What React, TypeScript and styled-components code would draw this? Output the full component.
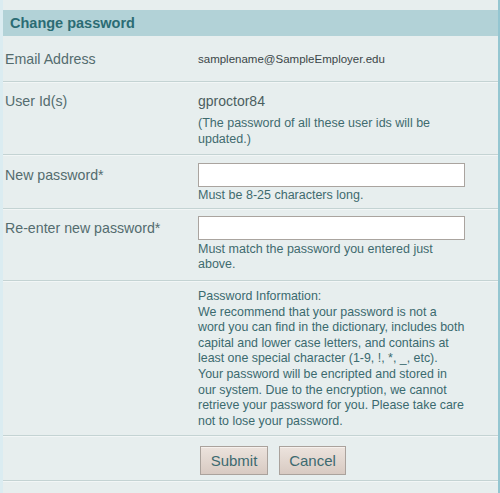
import React from "react";
import styled, { createGlobalStyle } from "styled-components";

const GlobalStyle = createGlobalStyle`
  html, body {
    margin: 0;
    padding: 0;
    background: #e7eeee;
  }
  body {
    font-family: "Liberation Sans", Arial, sans-serif;
  }
`;

const Page = styled.div`
  width: 500px;
  height: 493px;
  box-sizing: border-box;
  padding-top: 10px;
  background: #e7eeee;
  border-left: 3px solid #dbecf1;
  border-right: 2px solid #95c6d1;
  overflow: hidden;
`;

const Header = styled.div`
  height: 26px;
  display: flex;
  align-items: center;
  padding-left: 7px;
  background: #b2d2d7;
  color: #2b6c74;
  font-size: 14.5px;
  font-weight: 700;
`;

const Row = styled.div<{ $pt: number; $pb: number; $center?: boolean }>`
  display: grid;
  grid-template-columns: 193px 272px;
  align-items: ${(p) => (p.$center ? "center" : "start")};
  padding: ${(p) => `${p.$pt}px 0 ${p.$pb}px 2px`};
  border-bottom: 1px solid #c4d3d3;
  box-shadow: 0 1px 0 #f2f6f6;
  margin-bottom: 1px;
`;

const Label = styled.div<{ $lh: number }>`
  font-size: 14.2px;
  line-height: ${(p) => p.$lh}px;
  color: #546c6e;
`;

const Value = styled.div`
  display: flex;
  flex-direction: column;
`;

const Email = styled.div`
  font-size: 11.5px;
  line-height: 16px;
  color: #3b4648;
`;

const UserId = styled.div`
  font-size: 14px;
  line-height: 18px;
  color: #4b5e60;
`;

const Note = styled.div<{ $mt?: number; $lh?: number }>`
  font-size: 12.5px;
  line-height: ${(p) => p.$lh ?? 16}px;
  margin-top: ${(p) => p.$mt ?? 0}px;
  color: #3f6b6f;
  white-space: nowrap;
`;

const Input = styled.input`
  width: 267px;
  height: 24px;
  box-sizing: border-box;
  margin: 0;
  border: 1px solid #aaa49f;
  background: #ffffff;
  font-family: inherit;
  font-size: 13px;
  padding: 2px 4px;
`;

const Info = styled.div`
  font-size: 12.4px;
  line-height: 15.6px;
  color: #3b6a6e;
  white-space: nowrap;
`;

const Line = styled.span`
  display: block;
`;

const Buttons = styled.div`
  display: flex;
  gap: 11px;
  padding-left: 2px;
`;

const Button = styled.button<{ $w: number }>`
  width: ${(p) => p.$w}px;
  height: 29px;
  box-sizing: border-box;
  border: 1px solid #aaa29c;
  background: linear-gradient(#ece3dd, #d8cac2);
  box-shadow: inset 0 1px 0 #f6f0ec;
  color: #3d6a70;
  font-family: inherit;
  font-size: 15px;
  padding: 0;
  cursor: pointer;
`;

const infoLines = [
  "Password Information:",
  "We recommend that your password is not a",
  "word you can find in the dictionary, includes both",
  "capital and lower case letters, and contains at",
  "least one special character (1-9, !, *, _, etc).",
  "Your password will be encripted and stored in",
  "our system. Due to the encryption, we cannot",
  "retrieve your password for you. Please take care",
  "not to lose your password.",
];

export default function App() {
  return (
    <>
      <GlobalStyle />
      <Page>
        <Header>Change password</Header>

        <Row $pt={15} $pb={14} $center>
          <Label $lh={16}>Email Address</Label>
          <Email>samplename@SampleEmployer.edu</Email>
        </Row>

        <Row $pt={9} $pb={7}>
          <Label $lh={18}>User Id(s)</Label>
          <Value>
            <UserId>gproctor84</UserId>
            <Note $mt={5}>
              <Line>(The password of all these user ids will be</Line>
              <Line>updated.)</Line>
            </Note>
          </Value>
        </Row>

        <Row $pt={7} $pb={5}>
          <Label $lh={24}>New password*</Label>
          <Value>
            <Input type="password" />
            <Note>Must be 8-25 characters long.</Note>
          </Value>
        </Row>

        <Row $pt={6} $pb={8}>
          <Label $lh={24}>Re-enter new password*</Label>
          <Value>
            <Input type="password" />
            <Note $mt={2} $lh={15}>
              <Line>Must match the password you entered just</Line>
              <Line>above.</Line>
            </Note>
          </Value>
        </Row>

        <Row $pt={7} $pb={6}>
          <div />
          <Info>
            {infoLines.map((l) => (
              <Line key={l}>{l}</Line>
            ))}
          </Info>
        </Row>

        <Row $pt={9} $pb={5}>
          <div />
          <Buttons>
            <Button $w={68}>Submit</Button>
            <Button $w={67}>Cancel</Button>
          </Buttons>
        </Row>
      </Page>
    </>
  );
}
